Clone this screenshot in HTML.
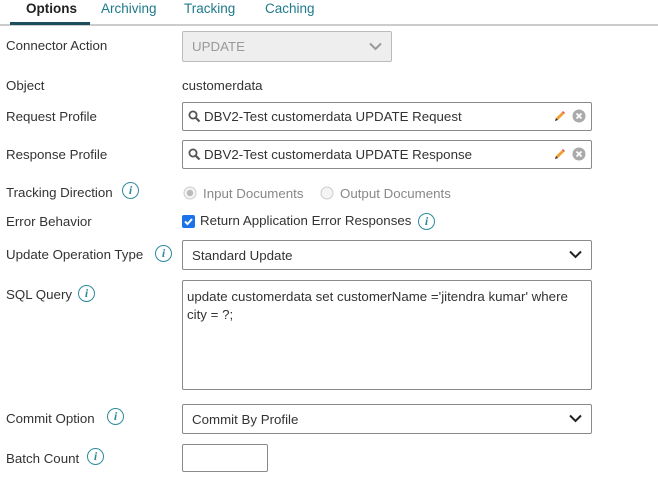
<!DOCTYPE html>
<html><head><meta charset="utf-8"><style>
*{box-sizing:border-box;margin:0;padding:0}
body{width:658px;height:503px;background:#fff;font-family:"Liberation Sans",sans-serif;font-size:13.3px;color:#333;position:relative;overflow:hidden}
.a{position:absolute;white-space:nowrap}
.tab{position:absolute;top:1px;font-size:13.5px;color:#1f7a8c}
.box{position:absolute;border:1px solid #8a8a8a;border-radius:2px;background:#fff}
.info{position:absolute;width:17px;height:17px;border:1.3px solid #2e8b9a;border-radius:50%;color:#2e8b9a;font:italic bold 12px "Liberation Serif",serif;text-align:center;line-height:15px}
.chev{position:absolute;right:9px;top:50%;margin-top:-5px}
</style></head><body>
<div class="tab" style="left:26px;color:#222;font-weight:bold">Options</div>
<div class="tab" style="left:101px">Archiving</div>
<div class="tab" style="left:184px">Tracking</div>
<div class="tab" style="left:265px">Caching</div>
<div class="a" style="left:0;top:24px;width:658px;height:2px;background:#ccc"></div>
<div class="a" style="left:10px;top:22px;width:80px;height:3px;background:#1d4e5e"></div>

<div class="a" style="left:6px;top:38px">Connector Action</div>
<div class="box" style="left:182px;top:31px;width:210px;height:31px;background:#eee;border-color:#bbb"><span class="a" style="left:9px;top:7px;color:#999">UPDATE</span>
<svg class="chev" width="13" height="9" viewBox="0 0 13 9"><path d="M1 1.5l5.5 5.5 5.5-5.5" fill="none" stroke="#999" stroke-width="2"/></svg></div>

<div class="a" style="left:6px;top:109px">Request Profile</div>
<div class="a" style="left:6px;top:78px">Object</div>
<div class="a" style="left:182px;top:78px">customerdata</div>
<div class="box" style="left:182px;top:102px;width:410px;height:29px">
<svg class="a" style="left:5px;top:7px" width="13" height="13" viewBox="0 0 13 13"><circle cx="5" cy="5" r="3.6" fill="none" stroke="#555" stroke-width="1.8"/><path d="M7.5 7.5l4 4" stroke="#555" stroke-width="2.2"/></svg>
<span class="a" style="left:21px;top:6px">DBV2-Test customerdata UPDATE Request</span>
<svg class="a" style="left:370px;top:7px" width="13" height="13" viewBox="0 0 13 13"><path d="M2 11l1-3 6-6 2 2-6 6z" fill="#f0a030"/><path d="M9 2l2 2 1-1-2-2z" fill="#e05050"/><path d="M2 11l1-3 2 2z" fill="#333"/></svg>
<svg class="a" style="left:389px;top:6px" width="14" height="14" viewBox="0 0 14 14"><circle cx="7" cy="7" r="6.5" fill="#aaa"/><path d="M4.5 4.5l5 5M9.5 4.5l-5 5" stroke="#fff" stroke-width="1.8"/></svg></div>

<div class="a" style="left:6px;top:147px">Response Profile</div>
<div class="box" style="left:182px;top:140px;width:410px;height:29px">
<svg class="a" style="left:5px;top:7px" width="13" height="13" viewBox="0 0 13 13"><circle cx="5" cy="5" r="3.6" fill="none" stroke="#555" stroke-width="1.8"/><path d="M7.5 7.5l4 4" stroke="#555" stroke-width="2.2"/></svg>
<span class="a" style="left:21px;top:6px">DBV2-Test customerdata UPDATE Response</span>
<svg class="a" style="left:370px;top:7px" width="13" height="13" viewBox="0 0 13 13"><path d="M2 11l1-3 6-6 2 2-6 6z" fill="#f0a030"/><path d="M9 2l2 2 1-1-2-2z" fill="#e05050"/><path d="M2 11l1-3 2 2z" fill="#333"/></svg>
<svg class="a" style="left:389px;top:6px" width="14" height="14" viewBox="0 0 14 14"><circle cx="7" cy="7" r="6.5" fill="#aaa"/><path d="M4.5 4.5l5 5M9.5 4.5l-5 5" stroke="#fff" stroke-width="1.8"/></svg></div>

<div class="a" style="left:6px;top:185px">Tracking Direction</div>
<div class="info" style="left:122px;top:182px">i</div>
<svg class="a" style="left:183px;top:186px" width="14" height="14"><circle cx="7" cy="7" r="6" fill="#f4f4f4" stroke="#ccc"/><circle cx="7" cy="7" r="3.2" fill="#bbb"/></svg>
<div class="a" style="left:203px;top:186px;color:#888">Input Documents</div>
<svg class="a" style="left:320px;top:186px" width="14" height="14"><circle cx="7" cy="7" r="6" fill="#f4f4f4" stroke="#ccc"/></svg>
<div class="a" style="left:340px;top:186px;color:#888">Output Documents</div>

<div class="a" style="left:6px;top:214px">Error Behavior</div>
<svg class="a" style="left:182px;top:215px" width="13" height="13"><rect width="13" height="13" rx="2" fill="#1a73e8"/><path d="M3 6.5l2.5 2.5 4.5-5" fill="none" stroke="#fff" stroke-width="2"/></svg>
<div class="a" style="left:200px;top:213px">Return Application Error Responses</div>
<div class="info" style="left:418px;top:213px">i</div>

<div class="a" style="left:6px;top:247px">Update Operation Type</div>
<div class="info" style="left:155px;top:245px">i</div>
<div class="box" style="left:182px;top:240px;width:410px;height:30px"><span class="a" style="left:9px;top:7px">Standard Update</span>
<svg class="chev" width="13" height="9" viewBox="0 0 13 9"><path d="M1 1.5l5.5 5.5 5.5-5.5" fill="none" stroke="#222" stroke-width="2"/></svg></div>

<div class="a" style="left:6px;top:287px">SQL Query</div>
<div class="info" style="left:78px;top:285px">i</div>
<div class="box" style="left:182px;top:280px;width:410px;height:110px"><div style="position:absolute;left:4px;top:7px;line-height:18px;white-space:nowrap">update customerdata set customerName ='jitendra kumar' where<br>city = ?;</div></div>

<div class="a" style="left:6px;top:411px">Commit Option</div>
<div class="info" style="left:107px;top:408px">i</div>
<div class="box" style="left:182px;top:404px;width:410px;height:30px"><span class="a" style="left:9px;top:7px">Commit By Profile</span>
<svg class="chev" width="13" height="9" viewBox="0 0 13 9"><path d="M1 1.5l5.5 5.5 5.5-5.5" fill="none" stroke="#222" stroke-width="2"/></svg></div>

<div class="a" style="left:6px;top:451px">Batch Count</div>
<div class="info" style="left:87px;top:448px">i</div>
<div class="box" style="left:182px;top:444px;width:86px;height:28px"></div>
</body></html>
